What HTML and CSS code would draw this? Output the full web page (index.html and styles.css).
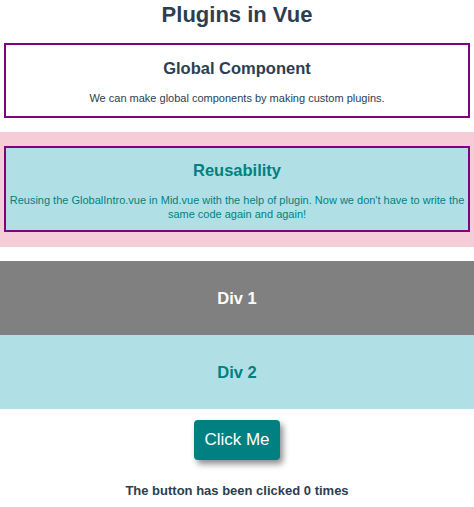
FILE: index.html
```html
<!DOCTYPE html>
<html>
<head>
<meta charset="utf-8">
<link rel="stylesheet" href="styles.css">
</head>
<body>
<div class="app">
  <h1 class="title">Plugins in Vue</h1>
  <div class="intro">
    <h3 class="intro-heading">Global Component</h3>
    <p class="intro-text">We can make global components by making custom plugins.</p>
  </div>
  <div class="mid">
    <div class="intro intro-reuse">
      <h3 class="intro-heading">Reusability</h3>
      <p class="intro-text">Reusing the GlobalIntro.vue in Mid.vue with the help of plugin. Now we don't have to write the same code again and again!</p>
    </div>
  </div>
  <div class="block block-one">Div 1</div>
  <div class="block block-two">Div 2</div>
  <div class="actions">
    <button class="click-btn">Click Me</button>
    <p class="counter">The button has been clicked 0 times</p>
  </div>
</div>
</body>
</html>
```
FILE: styles.css
```css
html, body {
  margin: 0;
  padding: 0;
  background: #ffffff;
}
.app {
  font-family: "Liberation Sans", Arial, sans-serif;
  color: #2c3e50;
  text-align: center;
  display: flex;
  flex-direction: column;
}
.title {
  font-size: 22px;
  line-height: 25px;
  font-weight: bold;
  margin: 2px 0 16px;
}
.intro {
  border: 2px solid #800080;
  margin: 0 4px;
  padding: 13px 6px 11px;
  background: #ffffff;
}
.intro-heading {
  font-size: 16.5px;
  line-height: 20px;
  font-weight: bold;
  margin: 0 0 13px;
}
.intro-text {
  font-size: 11px;
  line-height: 14px;
  margin: 0;
}
.mid {
  margin-top: 14px;
  background: #f4cdd9;
  padding: 14px 0 15px;
}
.intro-reuse {
  background: #b0e0e6;
  color: #008080;
  padding: 12px 2px 9px;
}
.block {
  height: 74px;
  display: flex;
  align-items: center;
  justify-content: center;
  font-size: 16.5px;
  font-weight: bold;
}
.block-one {
  margin-top: 14px;
  background: #808080;
  color: #ffffff;
}
.block-two {
  background: #b0e0e6;
  color: #008080;
}
.actions {
  display: flex;
  flex-direction: column;
  align-items: center;
  padding-top: 11px;
}
.click-btn {
  font-family: "Liberation Sans", Arial, sans-serif;
  font-size: 17px;
  line-height: 20px;
  width: 86px;
  height: 40px;
  padding: 0;
  border: none;
  border-radius: 4px;
  background: #008080;
  color: #ffffff;
  box-shadow: 3px 4px 6px rgba(0, 0, 0, 0.45);
}
.counter {
  font-size: 13px;
  line-height: 16px;
  font-weight: bold;
  margin: 23px 0 0;
}
```
